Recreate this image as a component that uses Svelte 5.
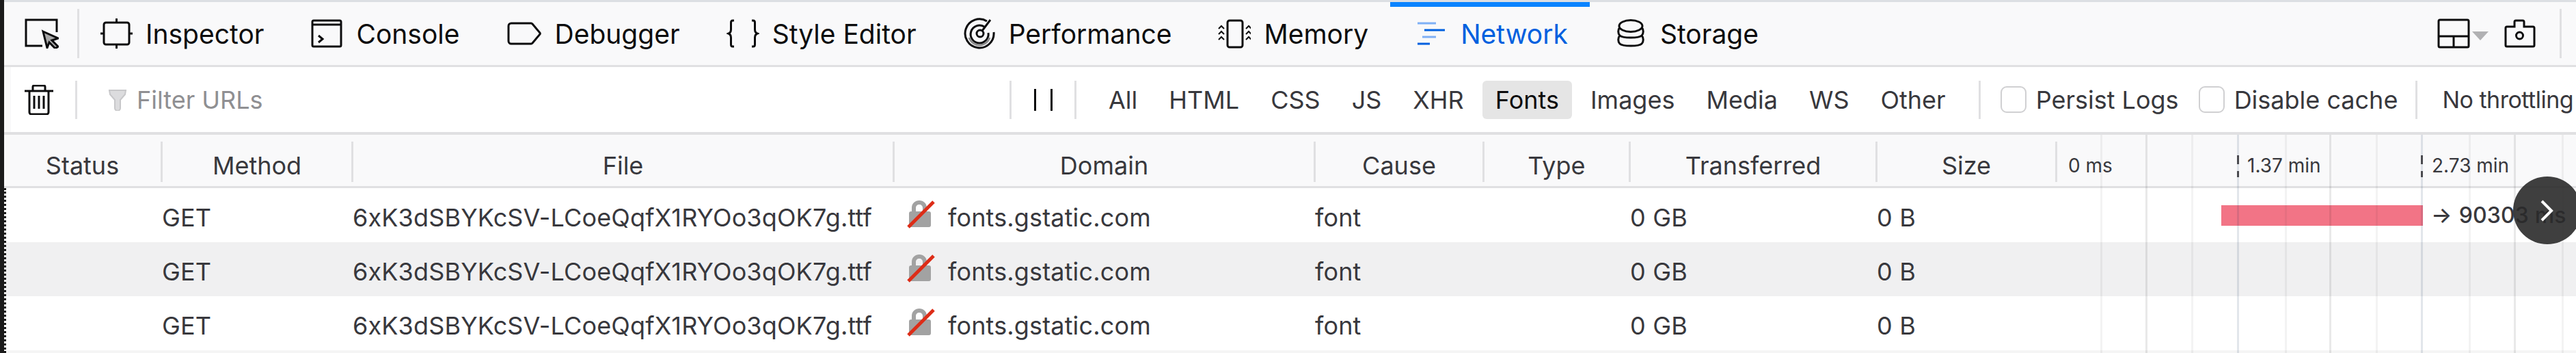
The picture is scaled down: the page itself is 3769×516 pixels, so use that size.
<script>
  const rows = [0, 1, 2];
  const filters = ["All", "HTML", "CSS", "JS", "XHR", "Fonts", "Images", "Media", "WS", "Other"];
  const fileName = "6xK3dSBYKcSV-LCoeQqfX1RYOo3qOK7g.ttf";
  // waterfall grid lines, offset from the start of the waterfall column
  const lines = [
    { x: 63, cls: "minor" },
    { x: 129, cls: "mid" },
    { x: 196, cls: "minor" },
    { x: 263, cls: "major" },
    { x: 333, cls: "minor" },
    { x: 398, cls: "mid" },
    { x: 466, cls: "minor" },
    { x: 532, cls: "major" },
    { x: 602, cls: "minor" },
    { x: 668, cls: "mid" },
    { x: 738, cls: "minor" },
  ];
</script>

<div class="app">
  <div class="edge"></div>
  <div class="main">
    <div class="topline"></div>
    <div class="tabbar">
      <button class="pick" aria-label="Pick element">
        <svg width="50" height="44" viewBox="0 0 50 44" class="ico">
          <path d="M26 40H2V2h45v18" />
          <path d="M27 19l22 10-9 3 9 9-4 3-9-9-3 8z" class="gray" />
        </svg>
      </button>
      <div class="vsep"></div>
      <div class="tab">
        <svg width="48" height="48" viewBox="0 0 48 48" class="ico">
          <rect x="6" y="8" width="37" height="32" rx="3" />
          <path d="M1 24h5M43 24h5M24.500 2v6M24.500 40v6" />
        </svg>
        <span>Inspector</span>
      </div>
      <div class="tab">
        <svg width="48" height="48" viewBox="0 0 48 48" class="ico">
          <rect x="3" y="5" width="42" height="38" rx="2" />
          <path d="M3 11h42M12 27l6 5-6 5" />
        </svg>
        <span>Console</span>
      </div>
      <div class="tab">
        <svg width="52" height="48" viewBox="0 0 52 48" class="ico">
          <path d="M7 9h29a3 3 0 0 1 2 1l11 13a2 2 0 0 1 0 2L38 38a3 3 0 0 1-2 1H7a4 4 0 0 1-4-4V13a4 4 0 0 1 4-4z" />
        </svg>
        <span>Debugger</span>
      </div>
      <div class="tab">
        <svg width="48" height="48" viewBox="0 0 48 48" class="ico">
          <path d="M11 5H9C7 5 6.500 6 6.500 8v10c0 3-1 5-3.500 6 2.500 1 3.500 3 3.500 6v10c0 2 .5 3 2.500 3h2" />
          <path d="M37 5h2c2 0 2.500 1 2.500 3v10c0 3 1 5 3.500 6-2.500 1-3.500 3-3.500 6v10c0 2-.5 3-2.500 3h-2" />
        </svg>
        <span>Style Editor</span>
      </div>
      <div class="tab">
        <svg width="48" height="48" viewBox="0 0 48 48" class="ico">
          <path d="M35 6A21 21 0 1 0 45 22" />
          <path d="M31 14a13 13 0 1 0 6 9" />
          <circle cx="25" cy="24" r="5" />
          <path d="M28 20L40 4" />
          <path d="M9 30c3 8 10 11 15 11s12-3 15-11" class="soft" />
        </svg>
        <span>Performance</span>
      </div>
      <div class="tab">
        <svg width="48" height="48" viewBox="0 0 48 48" class="ico">
          <rect x="14" y="5" width="22" height="39" rx="3" />
          <path d="M1 17l4-4 4 4M1 25l4-4 4 4M1 33l4-4 4 4M41 17l4-4 4 4M41 25l4-4 4 4M41 33l4-4 4 4" class="thin" />
        </svg>
        <span>Memory</span>
      </div>
      <div class="tab active">
        <svg width="48" height="48" viewBox="0 0 48 48" class="bars">
          <path d="M4 9h27M31 29h-20" class="soft" />
          <path d="M14 19h30M4 39h18" />
        </svg>
        <span>Network</span>
      </div>
      <div class="tab">
        <svg width="48" height="48" viewBox="0 0 48 48" class="ico">
          <ellipse cx="24" cy="13" rx="17" ry="8.500" />
          <path d="M8 15c-3 3-3 9 0 12 4 4 28 4 32 0 3-3 3-9 0-12" />
          <path d="M8 27c-3 3-3 9 0 12 4 4 28 4 32 0 3-3 3-9 0-12" />
        </svg>
        <span>Storage</span>
      </div>
      <div class="tab-actions">
        <svg width="48" height="44" viewBox="0 0 48 44" class="ico">
          <rect x="2" y="2" width="44" height="40" rx="2" />
          <path d="M2 26h44M24 26v16" />
        </svg>
        <span class="caret"></span>
        <svg width="48" height="42" viewBox="0 0 48 42" class="ico cam">
          <path d="M16 11V4a2 2 0 0 1 2-2h10a2 2 0 0 1 2 2v7h13a2 2 0 0 1 2 2v25a2 2 0 0 1-2 2H5a2 2 0 0 1-2-2V13a2 2 0 0 1 2-2z" />
          <circle cx="23.500" cy="24" r="5" />
        </svg>
        <div class="vsep last"></div>
      </div>
    </div>

    <div class="filterbar">
      <button class="trash" aria-label="Clear">
        <svg width="44" height="44" viewBox="0 0 44 44" class="ico">
          <path d="M1 9h42M13 9V3a2 2 0 0 1 2-2h14a2 2 0 0 1 2 2v6" />
          <path d="M8 9v31a3 3 0 0 0 3 3h22a3 3 0 0 0 3-3V9" />
          <path d="M15 16v19M22 16v19M29 16v19" />
        </svg>
      </button>
      <div class="vsep short"></div>
      <div class="filter-input">
        <svg width="28" height="32" viewBox="0 0 28 32" class="funnel">
          <path d="M2 2h24l-1 6-7 8v12a3 3 0 0 1-8 0V16L3 8z" />
        </svg>
        <span>Filter URLs</span>
      </div>
      <div class="vsep short"></div>
      <button class="pause" aria-label="Pause"><i></i><i></i></button>
      <div class="vsep short"></div>
      <div class="filters">
        {#each filters as f}
          <span class="fbtn" class:on={f === "Fonts"}>{f}</span>
        {/each}
      </div>
      <div class="vsep short"></div>
      <span class="check"></span><span>Persist Logs</span>
      <span class="check"></span><span>Disable cache</span>
      <div class="vsep short after-checks"></div>
      <span class="throttle">No throttling</span>
    </div>

    <div class="table">
      <div class="cols head">
        <div class="hcell">Status</div>
        <div class="hcell">Method</div>
        <div class="hcell">File</div>
        <div class="hcell">Domain</div>
        <div class="hcell">Cause</div>
        <div class="hcell">Type</div>
        <div class="hcell">Transferred</div>
        <div class="hcell">Size</div>
        <div class="hcell wf">
          <span>0 ms</span><span>1.37 min</span><span>2.73 min</span>
        </div>
      </div>
      {#each rows as r}
        <div class="cols row" class:odd={r === 1}>
          <div></div>
          <div class="cell">GET</div>
          <div class="cell">{fileName}</div>
          <div class="cell domain">
            <svg width="42" height="42" viewBox="0 0 42 42" class="lock">
              <path d="M7 40a3 3 0 0 1-3-3V20a3 3 0 0 1 3-3h1v-5C8 5 13 1 19 1s11 4 11 11v5h-6v-5c0-3-2-5-5-5s-5 2-5 5v5h19a3 3 0 0 1 3 3v17a3 3 0 0 1-3 3z" />
              <path d="M3 40L40 3" class="slash" />
            </svg>
            <span>fonts.gstatic.com</span>
          </div>
          <div class="cell">font</div>
          <div></div>
          <div class="cell">0 GB</div>
          <div class="cell">0 B</div>
          <div class="cell wfcell">
            {#if r === 0}
              <span class="bar"></span>
              <span class="arrow">→</span>
              <span class="timing">90303 ms</span>
            {/if}
          </div>
        </div>
      {/each}
      <div class="lines">
        {#each lines as l}
          <i class={l.cls} style="left:{l.x}px"></i>
        {/each}
      </div>
    </div>
  </div>

  <button class="next" aria-label="Next">
    <svg width="22" height="32" viewBox="0 0 22 32"><path d="M3 2l14 14L3 30" /></svg>
  </button>
</div>

<style>
  :global(body) {
    margin: 0;
    background: #fff;
    overflow: hidden;
  }
  .app {
    position: relative;
    display: flex;
    width: 3769px;
    height: 516px;
    overflow: hidden;
    font-family: Inter, "Liberation Sans", sans-serif;
  }
  .edge {
    flex: 0 0 6px;
    background: #1b1b1b;
  }
  .main {
    flex: 1;
    min-width: 0;
    display: flex;
    flex-direction: column;
  }
  button {
    background: none;
    border: none;
    padding: 0;
    display: flex;
  }
  .topline {
    height: 3px;
    background: #dcdfe3;
  }
  .tabbar {
    height: 95px;
    box-sizing: border-box;
    display: flex;
    align-items: center;
    background: #f9f9fa;
    border-bottom: 3px solid #e0e0e2;
    position: relative;
  }
  .ico {
    fill: none;
    stroke: #0c0c0d;
    stroke-width: 3;
    flex: none;
  }
  .ico .gray { fill: #a8a8a8; }
  .ico .soft { stroke: #8c8c8c; }
  .ico .thin { stroke-width: 2; }
  .pick { margin-left: 30px; }
  .vsep {
    width: 3px;
    height: 72px;
    background: #e0e0e2;
    flex: none;
  }
  .pick + .vsep { margin-left: 27px; }
  .tab {
    display: flex;
    align-items: center;
    gap: 19px;
    height: 100%;
    padding: 0 32px 0 36px;
    font-size: 39px;
    color: #0c0c0d;
    position: relative;
  }
  .vsep + .tab { margin-left: -6px; }
  .tab.active { color: #0060df; }
  .tab.active::before {
    content: "";
    position: absolute;
    left: 0;
    right: 0;
    top: 0;
    height: 7px;
    background: #0a84ff;
  }
  .bars {
    fill: none;
    stroke: #0060df;
    stroke-width: 3;
    flex: none;
  }
  .bars .soft { stroke: #7fb0f5; }
  .tab-actions {
    margin-left: auto;
    display: flex;
    align-items: center;
    height: 100%;
  }
  .caret {
    width: 0;
    height: 0;
    border-left: 12px solid transparent;
    border-right: 12px solid transparent;
    border-top: 13px solid #b1b1b3;
    margin: 6px 0 0 3px;
  }
  .cam { margin-left: 22px; }
  .vsep.last { margin: 0 21px 0 34px; }

  .filterbar {
    height: 99px;
    box-sizing: border-box;
    display: flex;
    align-items: center;
    background: linear-gradient(90deg, #f9f9fa 10px, #fff 10px);
    border-bottom: 4px solid #e0e0e2;
    font-size: 36px;
    color: #38383d;
    white-space: nowrap;
    overflow: hidden;
  }
  .vsep.short { height: 56px; }
  .trash { margin-left: 29px; margin-right: 31px; }
  .filter-input {
    flex: 0 0 1364px;
    box-sizing: border-box;
    display: flex;
    align-items: center;
    gap: 14px;
    padding-left: 45px;
    color: #8f8f92;
  }
  .funnel {
    fill: #dcdcde;
    stroke: #c8c8ca;
    stroke-width: 2;
    flex: none;
  }
  .pause {
    flex: 0 0 92px;
    gap: 21px;
    justify-content: center;
  }
  .pause i {
    width: 3px;
    height: 32px;
    background: #0c0c0d;
  }
  .filters {
    display: flex;
    align-items: center;
    gap: 8px;
    padding: 0 29px 0 28px;
  }
  .fbtn {
    padding: 6px 19px;
    border-radius: 6px;
  }
  .fbtn.on {
    background: #e5e5e5;
    color: #0c0c0d;
  }
  .check {
    width: 38px;
    height: 39px;
    box-sizing: border-box;
    border: 2px solid #d0d0d2;
    border-radius: 9px;
    margin: 0 14px 0 29px;
    flex: none;
    background: #fff;
  }
  .vsep.after-checks { margin-left: 26px; }
  .throttle {
    margin-left: 36px;
    font-size: 34px;
    letter-spacing: -0.5px;
  }

  .table {
    position: relative;
    flex: 1;
    background: #f5f5f5;
  }
  .table::before {
    content: "";
    position: absolute;
    left: 0;
    top: 78px;
    bottom: 0;
    border-left: 3px dotted #1b1b1b;
    z-index: 1;
  }
  .cols {
    display: grid;
    grid-template-columns: 232px 279px 792px 616px 247px 214px 361px 263px 759px;
  }
  .head {
    height: 78px;
    box-sizing: border-box;
    align-items: start;
    background: #f9f9fa;
    border-bottom: 3px solid #e0e0e2;
    font-size: 36px;
    color: #38383d;
  }
  .hcell {
    height: 59px;
    margin-top: 10px;
    display: flex;
    align-items: center;
    justify-content: center;
    border-right: 3px solid #e0e0e2;
    box-sizing: border-box;
    padding-top: 10px;
  }
  .hcell.wf {
    border-right: none;
    justify-content: flex-start;
    padding-left: 16px;
    font-size: 28px;
  }
  .wf span:nth-child(1) { width: 262px; flex: none; }
  .wf span:nth-child(2) { width: 270px; flex: none; }
  .row {
    height: 79px;
    align-items: center;
    background: #fff;
    font-size: 36px;
    letter-spacing: 0.15px;
    color: #38383d;
  }
  .row.odd { background: #f0f0f1; }
  .cell {
    margin-left: -1px;
    padding-top: 6px;
    white-space: nowrap;
  }
  .domain {
    display: flex;
    align-items: center;
    gap: 19px;
    padding-left: 18px;
    padding-top: 0;
  }
  .domain span { padding-top: 6px; }
  .lock { flex: none; margin-top: -4px; }
  .lock path { fill: #a2a2a2; }
  .lock .slash {
    fill: none;
    stroke: #dd2c17;
    stroke-width: 5;
  }
  .wfcell {
    display: flex;
    align-items: center;
    font-size: 32px;
    font-weight: 500;
    padding-top: 0;
    margin: 0;
  }
  .bar {
    width: 295px;
    height: 30px;
    margin-left: 240px;
    background: #f27486;
    flex: none;
  }
  .arrow { margin-left: 12px; }
  .timing { margin-left: 10px; }
  .lines {
    position: absolute;
    top: 0;
    bottom: 0;
    left: 3004px;
    width: 759px;
    pointer-events: none;
  }
  .lines i {
    position: absolute;
    top: 0;
    bottom: 0;
    width: 3px;
  }
  .lines .minor { background: rgba(12, 12, 13, 0.05); }
  .lines .mid { background: rgba(12, 12, 13, 0.09); }
  .lines .major { background: rgba(20, 50, 90, 0.12); }
  .lines .major::before {
    content: "";
    position: absolute;
    top: 30px;
    left: 0;
    width: 3px;
    height: 32px;
    background: linear-gradient(#4a4a4f 0 13px, transparent 13px 23px, #4a4a4f 23px);
  }
  .next {
    position: absolute;
    left: 3677px;
    top: 258px;
    width: 100px;
    height: 99px;
    border-radius: 50%;
    background: rgba(42, 42, 42, 0.9);
    align-items: center;
    justify-content: center;
  }
  .next svg {
    fill: none;
    stroke: #fff;
    stroke-width: 4;
  }
</style>
